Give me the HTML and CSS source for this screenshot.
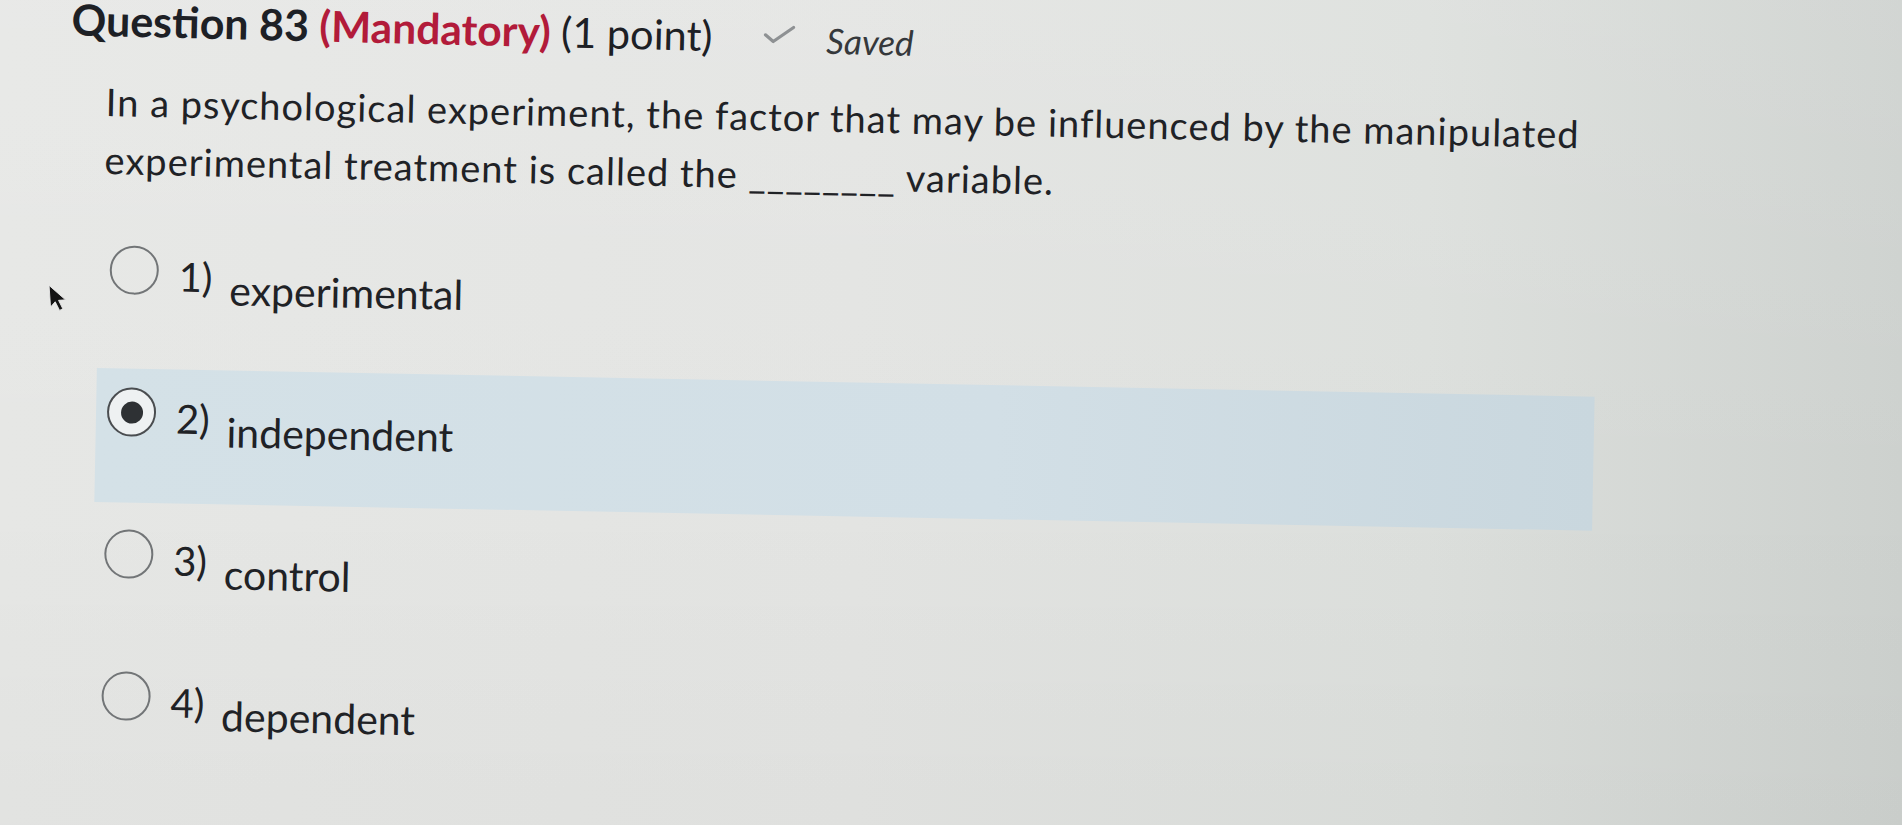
FILE: index.html
```html
<!DOCTYPE html>
<html lang="en">
<head>
<meta charset="utf-8">
<title>Question 83</title>
<link rel="stylesheet" href="styles.css">
</head>
<body>
<main class="sheet">
  <header class="q-head">
    <h1 class="q-title">Question 83 <span class="req">(Mandatory)</span> <span class="pts">(1 point)</span></h1>
    <span class="saved">
      <svg class="check" viewBox="0 0 34 20" width="34" height="20" aria-hidden="true"><path d="M3 10.5 L11 17 L31 2.5" fill="none" stroke="#8e9193" stroke-width="3.2" stroke-linecap="round" stroke-linejoin="round"/></svg>
      <span class="saved-text">Saved</span>
    </span>
  </header>
  <p class="q-text">In a psychological experiment, the factor that may be influenced by the manipulated experimental treatment is called the ________ variable.</p>
  <ul class="options">
    <li class="opt"><span class="radio"></span><span class="num">1)</span><span class="label">experimental</span></li>
    <li class="opt selected"><span class="radio"><span class="dot"></span></span><span class="num">2)</span><span class="label">independent</span></li>
    <li class="opt"><span class="radio"></span><span class="num">3)</span><span class="label">control</span></li>
    <li class="opt"><span class="radio"></span><span class="num">4)</span><span class="label">dependent</span></li>
  </ul>
  <svg class="cursor" viewBox="0 0 17 27" width="19" height="30" aria-hidden="true"><path d="M1.5 1.5 L1.5 21 L6 16.6 L9.4 24.6 L12.4 23.3 L9.1 15.5 L15.4 15.5 Z" fill="#141414" stroke="#e9e9e9" stroke-width="0.8" stroke-linejoin="round"/></svg>
</main>
</body>
</html>
```

FILE: styles.css
```css
html, body {
  margin: 0;
  padding: 0;
}

body {
  width: 1902px;
  height: 825px;
  overflow: hidden;
  font-family: Lato, "Open Sans", "Liberation Sans", sans-serif;
  color: #1f2226;
  background:
    linear-gradient(180deg, rgba(255,255,255,0.10) 0%, rgba(255,255,255,0) 60%, rgba(0,0,0,0.02) 100%),
    linear-gradient(90deg, #e6e7e5 0%, #e3e4e2 45%, #dcdfdc 75%, #cdd1ce 100%);
}

.sheet {
  position: relative;
  transform: rotate(1.1deg);
  transform-origin: 0 0;
  padding: 0 0 0 72px;
}

.q-head {
  display: flex;
  align-items: baseline;
  margin-top: -3px;
  height: 42px;
  transform: rotate(0.3deg);
  transform-origin: 0 50%;
}

.q-title {
  margin: 0;
  font-size: 43px;
  line-height: 42px;
  font-weight: 700;
  color: #1d2025;
  white-space: nowrap;
}

.req {
  color: #b21b3a;
  font-size: 42.5px;
}

.pts {
  font-weight: 400;
  font-size: 41.5px;
}

.saved {
  display: inline-flex;
  align-items: baseline;
  margin-left: 50px;
}

.check {
  align-self: center;
  position: relative;
  top: -4px;
}

.saved-text {
  margin-left: 30px;
  font-size: 35px;
  font-style: italic;
  color: #35383b;
}

.q-text {
  margin: 31px 0 0 36px;
  max-width: 1540px;
  font-size: 38px;
  letter-spacing: 1px;
  line-height: 58px;
  color: #1f2226;
  transform: rotate(0.15deg);
  transform-origin: 0 0;
}

.options {
  list-style: none;
  margin: 38px 0 0 32px;
  padding: 0;
  width: 1498px;
  display: flex;
  flex-direction: column;
  gap: 8px;
}

.opt {
  display: flex;
  align-items: flex-start;
  height: 134px;
  box-sizing: border-box;
  padding: 19px 0 0 11px;
}

.opt.selected {
  background: linear-gradient(90deg, #d4e1e7 0%, #d2dfe6 60%, #c9d7de 100%);
}

.radio {
  flex: none;
  width: 49px;
  height: 49px;
  box-sizing: border-box;
  border: 2.5px solid #727577;
  border-radius: 50%;
  display: flex;
  align-items: center;
  justify-content: center;
}

.selected .radio {
  border-color: #4a4d50;
  background: #eef1f2;
}

.dot {
  width: 22px;
  height: 22px;
  border-radius: 50%;
  background: #2e3134;
}

.num {
  margin-left: 20px;
  padding-top: 1px;
  font-size: 40px;
  line-height: 59px;
}

.label {
  margin-left: 17px;
  padding-top: 13px;
  font-size: 41px;
  line-height: 59px;
}

.cursor {
  position: absolute;
  left: 54px;
  top: 285px;
  transform: rotate(-5deg);
}
```
